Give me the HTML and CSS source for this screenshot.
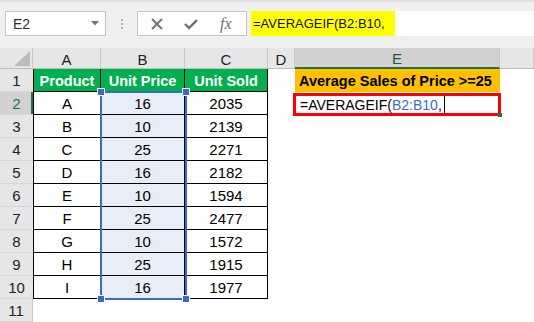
FILE: index.html
```html
<!DOCTYPE html>
<html lang="en">
<head>
    <meta charset="UTF-8">
    <title>AVERAGEIF</title>
    <link rel="stylesheet" href="styles.css">
</head>
<body>
<div class="app">
    <!-- formula bar -->
    <div class="formula-bar">
        <div class="name-box">
            <span>E2</span>
            <svg width="8" height="5" viewBox="0 0 8 5"><polygon points="0,0 8,0 4,4.5" fill="#777"/></svg>
        </div>
        <div class="grip"><i></i><i></i><i></i></div>
        <div class="fx-buttons">
            <svg class="ic-x" width="12" height="12" viewBox="0 0 12 12"><path d="M1 1 L11 11 M11 1 L1 11" stroke="#6e6e6e" stroke-width="1.8" fill="none"/></svg>
            <svg class="ic-ok" width="14" height="12" viewBox="0 0 14 12"><path d="M1 6 L5 10 L13 2" stroke="#6e6e6e" stroke-width="2.4" fill="none"/></svg>
            <span class="fx">fx</span>
        </div>
        <div class="formula-input"><span class="hl">=AVERAGEIF(B2:B10,</span></div>
    </div>

    <!-- sheet -->
    <div class="sheet">
        <div class="hd corner"><svg width="16" height="15" viewBox="0 0 16 15"><polygon points="16,0 16,15 0,15" fill="#bcbcbc"/></svg></div>
        <div class="hd">A</div>
        <div class="hd">B</div>
        <div class="hd">C</div>
        <div class="hd">D</div>
        <div class="hd hd-on">E</div>
        <div class="hd"></div>

        <div class="rh">1</div>
        <div class="t th first">Product</div>
        <div class="t th">Unit Price</div>
        <div class="t th">Unit Sold</div>
        <div class="c"></div>
        <div class="c gold">Average Sales of Price &gt;=25</div>
        <div class="c"></div>

        <div class="rh rh-on">2</div>
        <div class="t first">A</div>
        <div class="t sel">16</div>
        <div class="t">2035</div>
        <div class="c"></div>
        <div class="c edit">
            <span class="edit-text">=AVERAGEIF(<span class="ref">B2:B10</span>,</span><span class="caret"></span>
            <div class="edit-box"></div>
            <div class="fill-handle"></div>
        </div>
        <div class="c"></div>

        <div class="rh">3</div>
        <div class="t first">B</div>
        <div class="t sel">10</div>
        <div class="t">2139</div>
        <div class="c"></div><div class="c"></div><div class="c"></div>

        <div class="rh">4</div>
        <div class="t first">C</div>
        <div class="t sel">25</div>
        <div class="t">2271</div>
        <div class="c"></div><div class="c"></div><div class="c"></div>

        <div class="rh">5</div>
        <div class="t first">D</div>
        <div class="t sel">16</div>
        <div class="t">2182</div>
        <div class="c"></div><div class="c"></div><div class="c"></div>

        <div class="rh">6</div>
        <div class="t first">E</div>
        <div class="t sel">10</div>
        <div class="t">1594</div>
        <div class="c"></div><div class="c"></div><div class="c"></div>

        <div class="rh">7</div>
        <div class="t first">F</div>
        <div class="t sel">25</div>
        <div class="t">2477</div>
        <div class="c"></div><div class="c"></div><div class="c"></div>

        <div class="rh">8</div>
        <div class="t first">G</div>
        <div class="t sel">10</div>
        <div class="t">1572</div>
        <div class="c"></div><div class="c"></div><div class="c"></div>

        <div class="rh">9</div>
        <div class="t first">H</div>
        <div class="t sel">25</div>
        <div class="t">1915</div>
        <div class="c"></div><div class="c"></div><div class="c"></div>

        <div class="rh">10</div>
        <div class="t first">I</div>
        <div class="t sel">16</div>
        <div class="t">1977</div>
        <div class="c"></div><div class="c"></div><div class="c"></div>

        <div class="rh rh-last">11</div>
        <div class="c"></div><div class="c"></div><div class="c"></div>
        <div class="c"></div><div class="c"></div><div class="c"></div>

        <!-- selected range B2:B10 -->
        <div class="range">
            <i class="h tl"></i><i class="h tr"></i><i class="h bl"></i><i class="h br"></i>
        </div>
    </div>
</div>
</body>
</html>
```

FILE: styles.css
```css
body {
    margin: 0;
    font-family: "Liberation Sans", Arial, sans-serif;
    background: #fff;
}
.app {
    width: 534px;
    height: 322px;
    overflow: hidden;
}

/* formula bar */
.formula-bar {
    height: 48px;
    box-sizing: border-box;
    padding: 11px 0 0 5px;
    background: #f0f0f0;
    border-top: 2px solid #e3e3e3;
    display: flex;
    align-items: flex-start;
}
.formula-bar > * {
    margin-top: -2px;
}
.name-box {
    width: 101px;
    height: 25px;
    box-sizing: border-box;
    border: 1px solid #c6c6c6;
    background: #fff;
    display: flex;
    align-items: center;
    justify-content: space-between;
    padding: 0 6px 0 7px;
    font-size: 14px;
    color: #333;
}
.grip {
    width: 2px;
    margin-left: 15px;
    margin-right: 14px;
    padding-top: 8px;
    display: flex;
    flex-direction: column;
    gap: 2px;
}
.grip i {
    width: 2px;
    height: 2px;
    background: #b4b4b4;
}
.fx-buttons {
    width: 110px;
    height: 25px;
    box-sizing: border-box;
    border: 1px solid #c6c6c6;
    background: #fff;
    display: flex;
    align-items: center;
    padding-left: 13px;
}
.ic-ok {
    margin-left: 21px;
}
.fx {
    margin-left: 22px;
    font-family: "Liberation Serif", "Times New Roman", serif;
    font-style: italic;
    font-size: 16px;
    color: #6e6e6e;
}
.formula-input {
    flex: 1;
    height: 25px;
    margin-left: 4px;
    background: #fff;
    display: flex;
}
.formula-input .hl {
    width: 144px;
    box-sizing: border-box;
    background: #ffff00;
    padding-left: 2px;
    display: flex;
    align-items: center;
    font-size: 13px;
    color: #111;
}

/* sheet */
.sheet {
    position: relative;
    display: grid;
    grid-template-columns: 33px 68px 84px 83px 27px 205px 1fr;
    grid-template-rows: 21px repeat(11, 23px);
    font-size: 15px;
    color: #000;
}
.sheet > div {
    box-sizing: border-box;
    display: flex;
    align-items: center;
    justify-content: center;
}
.hd {
    background: #e6e6e6;
    border-right: 1px solid #c9c9c9;
    border-bottom: 1px solid #bdbdbd;
    color: #222;
    padding-top: 2px;
}
.hd.corner {
    justify-content: flex-end;
    align-items: flex-end;
    padding: 0 2px 2px 0;
}
.hd-on {
    background: #d2d2d2;
    border-bottom: 2px solid #217346;
    color: #1d5c37;
}
.rh {
    background: #e6e6e6;
    border-bottom: 1px solid #d6d6d6;
    color: #222;
}
.rh-on {
    background: #d2d2d2;
    color: #217346;
    box-shadow: inset -2px 0 0 #217346;
}
.rh-last {
    border-right: 1px solid #c9c9c9;
}
.t {
    border-right: 1px solid #000;
    border-bottom: 1px solid #000;
    padding-top: 1px;
}
.t.first {
    border-left: 1px solid #000;
}
.th {
    background: #00b050;
    color: #fff;
    font-weight: bold;
    font-size: 14.5px;
}
.sel {
    background: #e8eef8;
}
.sheet > .gold {
    background: #ffc000;
    font-weight: bold;
    font-size: 14.5px;
    justify-content: flex-start;
    padding: 1px 0 0 4px;
}
.sheet > .edit {
    position: relative;
    justify-content: flex-start;
    padding: 2px 0 0 5px;
    font-size: 14px;
}
.edit .ref {
    color: #3c6fc4;
}
.caret {
    width: 1px;
    height: 17px;
    margin-left: 2px;
    background: #000;
}
.edit-box {
    position: absolute;
    left: -2px;
    top: 1px;
    right: -1px;
    bottom: -1px;
    border: 3px solid #ff0000;
}
.fill-handle {
    position: absolute;
    right: -2px;
    bottom: -2px;
    width: 4px;
    height: 4px;
    background: #217346;
}

/* selected range overlay */
.range {
    position: absolute;
    left: 100px;
    top: 43px;
    width: 87px;
    height: 209px;
    box-sizing: border-box;
    border: 2px solid #3a6bc2;
    pointer-events: none;
}
.range .h {
    position: absolute;
    width: 6px;
    height: 6px;
    background: #3a6bc2;
    border: 1px solid #fff;
}
.range .tl { left: -5px; top: -5px; }
.range .tr { right: -5px; top: -5px; }
.range .bl { left: -5px; bottom: -5px; }
.range .br { right: -5px; bottom: -5px; }
```
